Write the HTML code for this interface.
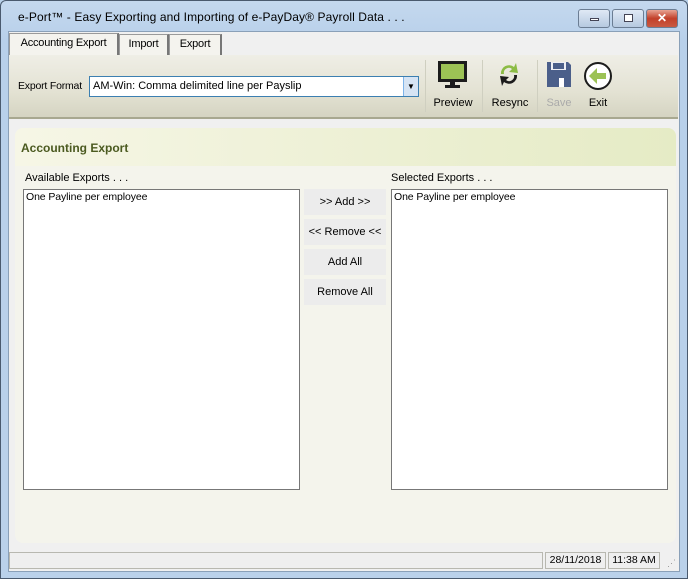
<!DOCTYPE html>
<html><head><style>
*{margin:0;padding:0;box-sizing:border-box}
body{width:688px;height:579px;overflow:hidden;background:#b9d1ea;font-family:"Liberation Sans",sans-serif;font-size:11px;color:#000;position:relative}
.a{position:absolute}
.frame{left:0;top:0;width:688px;height:579px;background:linear-gradient(#c4d8ee,#b8d0ea 40px,#bad1ea);border:1px solid #4a5a6e;border-radius:6px 6px 0 0}
.client{left:8px;top:31px;width:672px;height:541px;background:#f0f0f0;border:1px solid #8aa0b8}
.btn{border:1px solid #6b7d93;border-radius:3px;height:19px;top:9px}
.tab{top:34px;height:21px;background:#f4f3ee;border:1px solid #9a9a9a;border-bottom:none;border-right:2px solid #777;font-size:11px;text-align:center;line-height:18px;letter-spacing:-0.2px}
.list{background:#fff;border:1px solid #777;font-size:10.5px;padding:1px 2px;letter-spacing:-0.1px}
.b{background:#ececec;width:82px;height:26px;left:304px;text-align:center;line-height:26px;font-size:11px}
.tl{font-size:11px;text-align:center}
.stat{border:1px solid #b8b8b0;height:17px;top:552px;font-size:10.5px;line-height:15px;text-align:center;background:#efefef}
</style></head><body>
<div class="a frame"></div>
<div class="a" style="left:18px;top:10px;font-size:12px;color:#000;letter-spacing:0.1px">e-Port™ - Easy Exporting and Importing of e-PayDay® Payroll Data . . .</div>
<div class="a btn" style="left:578px;width:32px;background:linear-gradient(#dfe9f5,#b6c9e0)"><div class="a" style="left:11px;top:8px;width:9px;height:3px;background:#fff;border:1px solid #445"></div></div>
<div class="a btn" style="left:612px;width:32px;background:linear-gradient(#dfe9f5,#b6c9e0)"><div class="a" style="left:11px;top:4px;width:9px;height:8px;border:1px solid #445;background:#fff"></div></div>
<div class="a btn" style="left:646px;width:32px;background:linear-gradient(#e8a392,#c2402a 50%,#c95a42)"><div class="a" style="left:0;top:0;width:30px;text-align:center;color:#fff;font-weight:bold;font-size:12px;line-height:17px">✕</div></div>
<div class="a client"></div>
<div class="a tab" style="left:9px;width:110px;height:22px;top:33px;background:#f4f3ee">Accounting Export</div>
<div class="a tab" style="left:119px;width:50px">Import</div>
<div class="a tab" style="left:169px;width:53px">Export</div>
<div class="a" style="left:9px;top:55px;width:669px;height:64px;background:linear-gradient(#efeee6,#e3e2d3 60%,#d5d4c2);border-bottom:2px solid #a8a890"></div>
<div class="a" style="left:18px;top:80px;font-size:10.5px;letter-spacing:-0.2px">Export Format</div>
<div class="a" style="left:89px;top:76px;width:330px;height:21px;background:#fff;border:1px solid #3c7fb1;font-size:11px;line-height:18px;padding-left:3px">AM-Win: Comma delimited line per Payslip</div>
<div class="a" style="left:403px;top:77px;width:15px;height:19px;background:#d6e4f4;border-left:1px solid #7eb4ea;font-size:8px;text-align:center;line-height:19px">▼</div>
<div class="a" style="left:425px;top:60px;width:1px;height:52px;background:#cfcfc0"></div>
<div class="a" style="left:482px;top:60px;width:1px;height:52px;background:#cfcfc0"></div>
<div class="a" style="left:537px;top:60px;width:1px;height:52px;background:#cfcfc0"></div>
<svg class="a" style="left:436px;top:60px" width="34" height="30"><rect x="2" y="1" width="29" height="21" fill="#1c1c1c"/><rect x="5" y="4" width="23" height="15" fill="#9cc255"/><rect x="14" y="22" width="5" height="4" fill="#1c1c1c"/><rect x="9" y="25" width="15" height="3" fill="#1c1c1c"/></svg>
<div class="a tl" style="left:430px;top:97px;width:46px">Preview</div>
<svg class="a" style="left:496px;top:60px" width="26" height="30"><path d="M5 14 A8 8 0 0 1 18 7 L20 3 L22 13 L13 12 L16 9 A5 5 0 0 0 8 14 Z" fill="#8cbc45"/><path d="M21 15 A8 8 0 0 1 8 22 L6 26 L4 16 L13 17 L10 20 A5 5 0 0 0 18 15 Z" fill="#1c1c1c"/></svg>
<div class="a tl" style="left:487px;top:97px;width:46px">Resync</div>
<svg class="a" style="left:546px;top:61px" width="26" height="28"><path d="M1 1 H22 L25 4 V26 H1 Z" fill="#4b5f8a"/><rect x="5" y="1" width="15" height="8" fill="#fff" opacity=".9"/><rect x="7" y="2" width="11" height="6" fill="#4b5f8a"/><rect x="13" y="17" width="5" height="9" fill="#fff"/></svg>
<div class="a tl" style="left:542px;top:97px;width:34px;color:#aaa">Save</div>
<svg class="a" style="left:583px;top:61px" width="30" height="30"><circle cx="15" cy="15" r="13" fill="#fff" stroke="#1c1c1c" stroke-width="2"/><path d="M6 15 L14 7 V12 H23 V18 H14 V23 Z" fill="#9cc255"/></svg>
<div class="a tl" style="left:583px;top:97px;width:30px">Exit</div>
<div class="a" style="left:15px;top:128px;width:661px;height:415px;background:#f4f4ec;border-radius:8px"></div>
<div class="a" style="left:15px;top:128px;width:661px;height:38px;background:linear-gradient(90deg,#f6f6e6,#e5ebc5);border-radius:8px 8px 0 0"></div>
<div class="a" style="left:21px;top:141px;font-size:12px;font-weight:bold;color:#4b5a20">Accounting Export</div>
<div class="a" style="left:25px;top:172px;font-size:11px">Available Exports . . .</div>
<div class="a" style="left:391px;top:172px;font-size:11px">Selected Exports . . .</div>
<div class="a list" style="left:23px;top:189px;width:277px;height:301px">One Payline per employee</div>
<div class="a list" style="left:391px;top:189px;width:277px;height:301px">One Payline per employee</div>
<div class="a b" style="top:189px">&gt;&gt; Add &gt;&gt;</div>
<div class="a b" style="top:219px">&lt;&lt; Remove &lt;&lt;</div>
<div class="a b" style="top:249px">Add All</div>
<div class="a b" style="top:279px">Remove All</div>
<div class="a stat" style="left:9px;top:552px;width:534px"></div>
<div class="a stat" style="left:545px;width:61px">28/11/2018</div>
<div class="a stat" style="left:608px;width:52px">11:38 AM</div>
<div class="a" style="left:667px;top:558px;font-size:9px;color:#999;letter-spacing:-1px">⋰</div>
</body></html>
